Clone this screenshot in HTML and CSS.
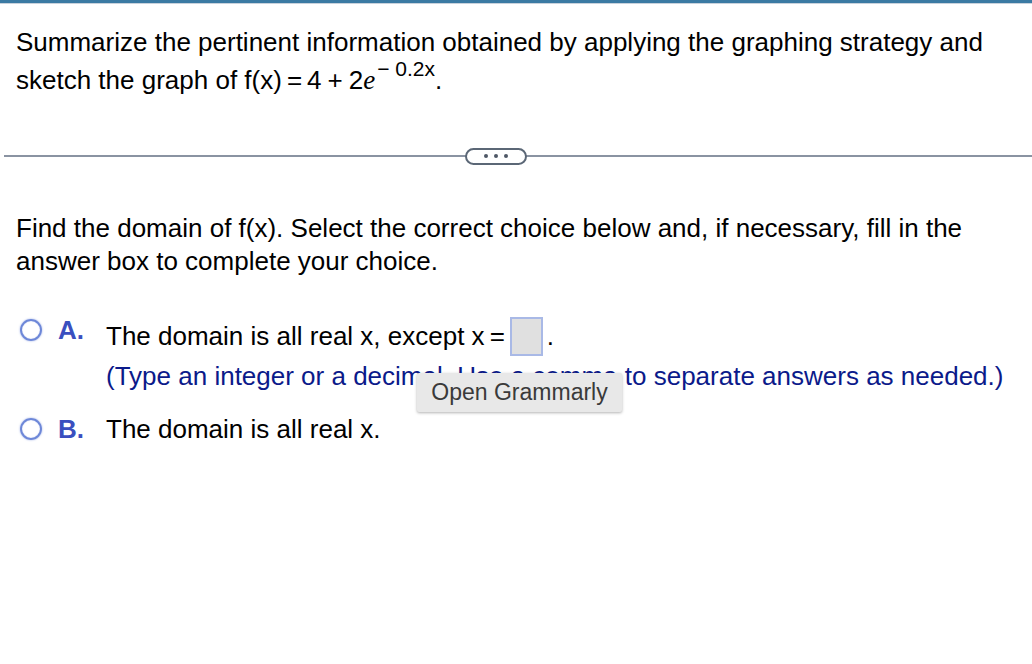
FILE: index.html
```html
<!DOCTYPE html>
<html>
<head>
<meta charset="utf-8">
<link rel="stylesheet" href="styles.css">
</head>
<body>
<div class="topbar"></div>
<div class="question">
  <p class="q-line">Summarize the pertinent information obtained by applying the graphing strategy and</p>
  <p class="q-line">sketch the graph of f(x)<span class="eq">=</span>4<span class="op">+</span>2<span class="e">e</span><sup class="sup">− 0.2x</sup>.</p>
</div>
<div class="divider">
  <span class="pill"><span class="dot"></span><span class="dot"></span><span class="dot"></span></span>
</div>
<div class="part">
  <p class="instr">Find the domain of f(x). Select the correct choice below and, if necessary, fill in the answer box to complete your choice.</p>
  <div class="choices">
    <div class="choice choice-a">
      <span class="radio"></span>
      <span class="letter">A.</span>
      <div class="body">
        <div class="line1">The domain is all real x, except x<span class="eq">=</span><span class="answer"></span>.</div>
        <div class="hint">(Type an integer or a decimal. Use a comma to separate answers as needed.)</div>
        <div class="tooltip">Open Grammarly</div>
      </div>
    </div>
    <div class="choice choice-b">
      <span class="radio"></span>
      <span class="letter">B.</span>
      <div class="body">
        <div class="line1">The domain is all real x.</div>
      </div>
    </div>
  </div>
</div>
</body>
</html>
```
FILE: styles.css
```css
html, body {
  margin: 0;
  padding: 0;
  background: #ffffff;
}
body {
  font-family: "Liberation Sans", Arial, sans-serif;
  color: #000;
  font-size: 26px;
}
.topbar {
  height: 3px;
  background: #3b7aa3;
  border-bottom: 1px solid #c9d2dc;
}
.question {
  padding: 19px 16px 0 16px;
}
.q-line {
  margin: 0;
  line-height: 38px;
  white-space: nowrap;
}
.eq { margin: 0 5px; }
.op { margin: 0 6px; }
.e {
  font-family: "Liberation Serif", "Times New Roman", serif;
  font-style: italic;
  font-size: 27px;
}
.sup {
  font-size: 21px;
  vertical-align: 13px;
  line-height: 0;
  margin-left: 2px;
}
.divider {
  margin: 56px 0 0 4px;
  height: 2px;
  background: #8a93a2;
  display: flex;
  justify-content: center;
  align-items: center;
}
.pill {
  position: relative;
  left: -22px;
  width: 58px;
  height: 13px;
  border: 2px solid #5b6776;
  border-radius: 9px;
  background: #fff;
  display: flex;
  justify-content: center;
  align-items: center;
  gap: 6px;
}
.dot {
  width: 4px;
  height: 4px;
  border-radius: 50%;
  background: #4f5866;
}
.part {
  padding: 55px 16px 0 16px;
  width: 1000px;
  box-sizing: border-box;
}
.instr {
  margin: 0;
  line-height: 33px;
}
.choices {
  margin-top: 38px;
  display: flex;
  flex-direction: column;
  gap: 19px;
}
.choice {
  display: flex;
  align-items: flex-start;
}
.radio {
  width: 18px;
  height: 18px;
  border: 2px solid #6d87d8;
  border-radius: 50%;
  margin-left: 4px;
  box-shadow: 0 0 2px rgba(109,135,216,0.7), inset 0 0 1px rgba(109,135,216,0.6);
  flex: none;
}
.choice-a .radio { margin-top: 3px; }
.choice-b .radio { margin-top: 6px; }
.letter {
  color: #3a4fbf;
  font-weight: bold;
  width: 48px;
  margin-left: 16px;
  flex: none;
  line-height: 28px;
}
.choice-a .letter { margin-top: 0; }
.choice-b .letter { margin-top: 3px; }
.body {
  position: relative;
}
.line1 {
  height: 40px;
  display: flex;
  align-items: center;
}
.choice-b .line1 { height: 34px; }
.answer {
  display: inline-block;
  width: 29px;
  height: 35px;
  background: #e0e0e0;
  border: 2px solid #a9b9e6;
  margin: 0 4px 0 0;
}
.hint {
  color: #0b1a8a;
  line-height: 34px;
  margin-top: 3px;
  white-space: nowrap;
}
.tooltip {
  position: absolute;
  left: 311px;
  top: 57px;
  width: 205px;
  height: 39px;
  background: #e8e8e8;
  color: #3a3a3a;
  font-family: "Liberation Sans", Arial, sans-serif;
  font-size: 23px;
  line-height: 39px;
  text-align: center;
  box-shadow: 0 1px 3px rgba(0,0,0,0.3);
  border-radius: 2px;
}
```
